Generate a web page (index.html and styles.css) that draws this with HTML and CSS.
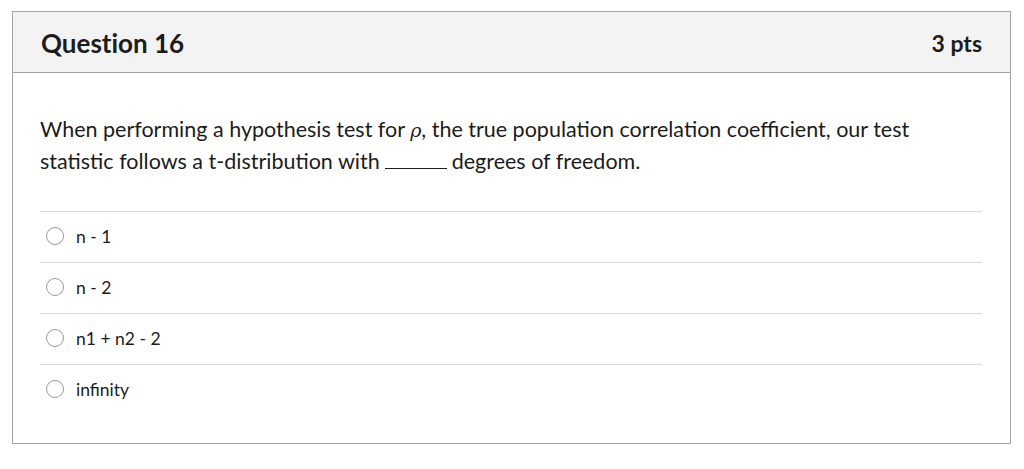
FILE: index.html
```html
<!DOCTYPE html>
<html>
<head>
<meta charset="utf-8">
<link rel="stylesheet" href="styles.css">
</head>
<body>
<div class="question">
  <div class="header">
    <div class="title">Question 16</div>
    <div class="pts">3 pts</div>
  </div>
  <div class="content">
    <p class="text">When performing a hypothesis test for <i class="rho">ρ</i>, the true popula&zwnj;tion correla&zwnj;tion coefficient, our test statis&zwnj;tic follows a t-distribu&zwnj;tion with <span class="blank"></span> degrees of freedom.</p>
    <div class="answers">
      <label class="answer"><span class="radio"></span><span class="label">n - 1</span></label>
      <label class="answer"><span class="radio"></span><span class="label">n - 2</span></label>
      <label class="answer"><span class="radio"></span><span class="label">n1 + n2 - 2</span></label>
      <label class="answer"><span class="radio"></span><span class="label">infinity</span></label>
    </div>
  </div>
</div>
</body>
</html>
```

FILE: styles.css
```css
html, body {
  margin: 0;
  padding: 0;
  background: #ffffff;
}
body {
  padding: 11px 0 0 12px;
  font-family: Lato, "Open Sans", sans-serif;
  color: #1c1c1c;
}
.question {
  width: 997px;
  height: 431px;
  border: 1px solid #a3a3a3;
  display: flex;
  flex-direction: column;
}
.header {
  height: 60px;
  background: #f3f3f3;
  border-bottom: 1px solid #a3a3a3;
  display: flex;
  align-items: center;
  justify-content: space-between;
  padding: 0 28px 0 28px;
}
.title {
  font-size: 26px;
  font-weight: 700;
  padding-top: 1px;
  font-variant-ligatures: none;
  font-feature-settings: "liga" 0, "clig" 0;
}
.pts {
  font-size: 23px;
  font-weight: 700;
  padding-top: 1px;
}
.content {
  padding: 41px 28px 0 27px;
}
.text {
  margin: 0;
  font-size: 21.5px;
  line-height: 31px;
  width: 900px;
}
.rho {
  font-family: "DejaVu Serif", serif;
  font-size: 19px;
}
.blank {
  display: inline-block;
  width: 62px;
  height: 1px;
  border-bottom: 1.5px solid #1c1c1c;
  vertical-align: baseline;
  margin-right: -1px;
}
.answers {
  margin-top: 34px;
}
.answer {
  display: flex;
  align-items: center;
  height: 51px;
  border-top: 1px solid #d9d9d9;
  padding-bottom: 2px;
  box-sizing: border-box;
}
.radio {
  width: 16px;
  height: 16px;
  border: 1px solid #9a9a9a;
  border-radius: 50%;
  margin: 0 12px 0 6px;
  background: #fff;
  box-sizing: content-box;
}
.label {
  font-size: 17.5px;
}
```
